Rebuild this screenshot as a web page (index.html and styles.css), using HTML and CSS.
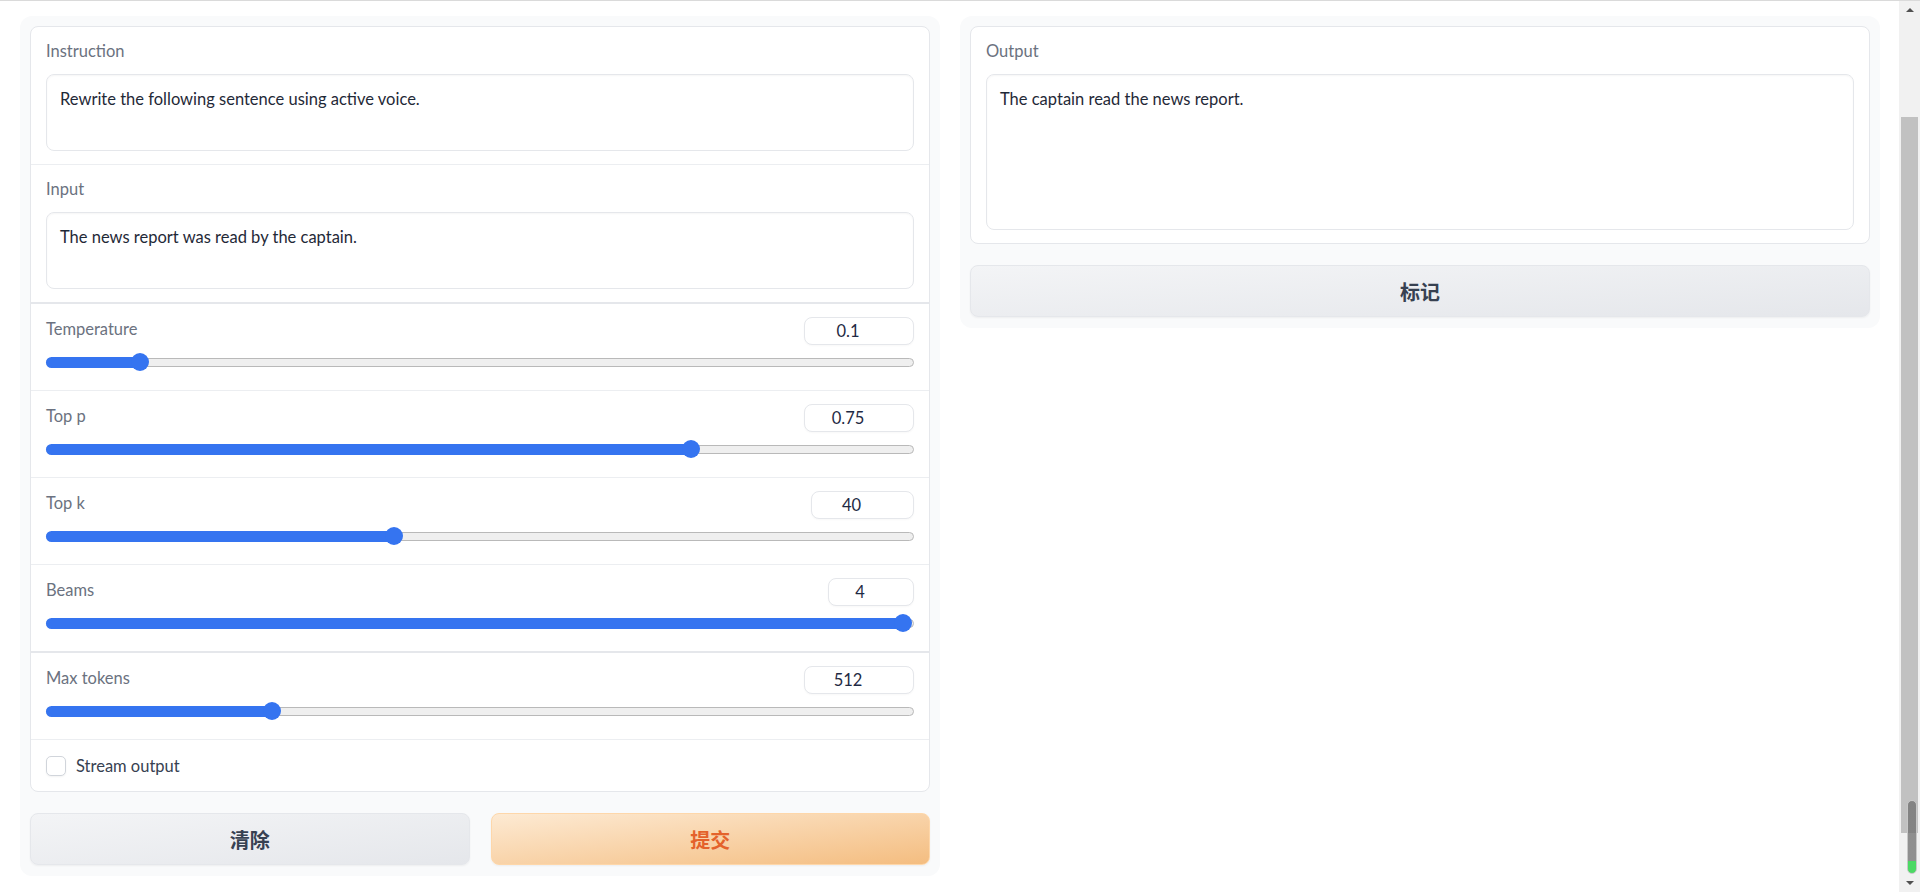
FILE: index.html
```html
<!DOCTYPE html>
<html lang="en">
<head>
    <meta charset="UTF-8">
    <meta name="viewport" content="width=device-width, initial-scale=1.0">
    <title>Alpaca LoRA</title>
    <link rel="stylesheet" href="styles.css">
</head>
<body>
    <div class="app">
        <main class="page">
            <!-- left column: prompt + generation settings -->
            <section class="col">
                <div class="panel">
                    <div class="card">
                        <div class="field">
                            <label class="lbl">Instruction</label>
                            <textarea class="box box-sm" readonly>Rewrite the following sentence using active voice.</textarea>
                        </div>
                        <div class="field">
                            <label class="lbl">Input</label>
                            <textarea class="box box-sm" readonly>The news report was read by the captain.</textarea>
                        </div>

                        <div class="field range group-start">
                            <div class="range-head">
                                <label class="lbl">Temperature</label>
                                <input class="num" type="text" value="0.1" readonly>
                            </div>
                            <div class="slider"><div class="track"><div class="fill" style="--v: 0.1"></div></div></div>
                        </div>
                        <div class="field range">
                            <div class="range-head">
                                <label class="lbl">Top p</label>
                                <input class="num" type="text" value="0.75" readonly>
                            </div>
                            <div class="slider"><div class="track"><div class="fill" style="--v: 0.75"></div></div></div>
                        </div>
                        <div class="field range">
                            <div class="range-head">
                                <label class="lbl">Top k</label>
                                <input class="num num-md" type="text" value="40" readonly>
                            </div>
                            <div class="slider"><div class="track"><div class="fill" style="--v: 0.4"></div></div></div>
                        </div>
                        <div class="field range">
                            <div class="range-head">
                                <label class="lbl">Beams</label>
                                <input class="num num-sm" type="text" value="4" readonly>
                            </div>
                            <div class="slider"><div class="track"><div class="fill" style="--v: 1"></div></div></div>
                        </div>
                        <div class="field range group-start">
                            <div class="range-head">
                                <label class="lbl">Max tokens</label>
                                <input class="num" type="text" value="512" readonly>
                            </div>
                            <div class="slider"><div class="track"><div class="fill" style="--v: 0.256"></div></div></div>
                        </div>

                        <div class="field check">
                            <span class="checkbox"></span>
                            <span class="check-text">Stream output</span>
                        </div>
                    </div>

                    <div class="actions">
                        <button class="btn">清除</button>
                        <button class="btn btn-primary">提交</button>
                    </div>
                </div>
            </section>

            <!-- right column: output -->
            <section class="col">
                <div class="panel">
                    <div class="card">
                        <div class="field">
                            <label class="lbl">Output</label>
                            <textarea class="box box-lg" readonly>The captain read the news report.</textarea>
                        </div>
                    </div>
                    <button class="btn">标记</button>
                </div>
            </section>
        </main>

        <div class="scrollbar">
            <span class="arrow arrow-up"></span>
            <div class="sb-track">
                <div class="sb-thumb"></div>
                <div class="sb-pill"></div>
            </div>
            <span class="arrow arrow-down"></span>
        </div>
    </div>
</body>
</html>
```

FILE: styles.css
```css
* {
    box-sizing: border-box;
}

html, body {
    margin: 0;
    height: 100%;
    overflow: hidden;
}

body {
    background: #fff;
    font-family: Lato, "Noto Sans", "Noto Sans CJK SC", sans-serif;
    color: #1f2937;
    border-top: 1px solid #dadada;
}

.app {
    display: flex;
    height: 100%;
}

.page {
    flex: 1;
    display: grid;
    grid-template-columns: 1fr 1fr;
    gap: 20px;
    align-items: start;
    padding: 15px 19px 0 20px;
}

.panel {
    background: #f9fafb;
    border-radius: 12px;
    padding: 10px 10px 11px;
    display: flex;
    flex-direction: column;
    gap: 21px;
}

.card {
    background: #fff;
    border: 1px solid #e5e7eb;
    border-radius: 8px;
    overflow: hidden;
}

.field {
    padding: 14px 15px 13px;
    border-top: 1px solid #eceef1;
}

.field:first-child {
    border-top: none;
}

.group-start {
    border-top: 2px solid #e5e7eb;
}

.lbl {
    display: block;
    font-size: 16.5px;
    line-height: 20px;
    color: #6b7280;
    margin-bottom: 13px;
}

.box {
    display: block;
    width: 100%;
    border: 1px solid #e5e7eb;
    border-radius: 8px;
    padding: 12px 13px;
    font: 16.5px/24px Lato, "Noto Sans", sans-serif;
    color: #1f2937;
    resize: none;
    outline: none;
    box-shadow: inset 0 1px 2px rgba(0, 0, 0, 0.04);
}

.box-sm {
    height: 77px;
}

.box-lg {
    height: 156px;
}

/* sliders */
.range {
    padding-top: 13px;
    padding-bottom: 19px;
}

.range-head {
    display: flex;
    justify-content: space-between;
    align-items: flex-start;
}

.range-head .lbl {
    margin: 2px 0 0;
}

.num {
    width: 110px;
    height: 28px;
    border: 1px solid #e5e7eb;
    border-radius: 8px;
    padding: 0 22px 0 0;
    text-align: center;
    font: 16.5px Lato, sans-serif;
    color: #1f2a44;
    outline: none;
    box-shadow: 0 1px 2px rgba(0, 0, 0, 0.03);
}

.num-md {
    width: 103px;
}

.num-sm {
    width: 86px;
}

.slider {
    height: 18px;
    margin-top: 8px;
    display: flex;
    align-items: center;
}

.track {
    flex: 1;
    height: 9px;
    background: #efefef;
    border: 1px solid #b9b9b9;
    border-radius: 5px;
    display: flex;
    align-items: center;
}

.fill {
    position: relative;
    width: calc(9px + var(--v) * (100% - 18px));
    height: 11px;
    margin-left: -1px;
    background: #3574f0;
    border-radius: 6px;
}

.fill::after {
    content: "";
    position: absolute;
    right: -9px;
    top: 50%;
    width: 18px;
    height: 18px;
    margin-top: -9px;
    border-radius: 50%;
    background: #3574f0;
}

/* checkbox row */
.check {
    display: flex;
    align-items: center;
    gap: 10px;
    padding: 16px 15px 15px;
}

.checkbox {
    width: 20px;
    height: 20px;
    border: 1px solid #d1d5db;
    border-radius: 5px;
    background: #fff;
    box-shadow: 0 1px 2px rgba(0, 0, 0, 0.05);
}

.check-text {
    font-size: 16.5px;
    color: #374151;
}

/* buttons */
.actions {
    display: grid;
    grid-template-columns: 1fr 1fr;
    gap: 21px;
}

.btn {
    height: 52px;
    border: 1px solid #e5e7eb;
    border-radius: 8px;
    background: linear-gradient(to bottom right, #f3f4f6, #e5e7eb);
    font: 700 20px "Noto Sans CJK SC", sans-serif;
    color: #374151;
    box-shadow: 0 1px 2px rgba(0, 0, 0, 0.05);
}

.btn-primary {
    border-color: #fed7aa;
    background: linear-gradient(to bottom right, #fdead3, #f4bd80);
    color: #e4622b;
}

/* fake browser scrollbar */
.scrollbar {
    width: 21px;
    flex-shrink: 0;
    background: #f1f1f1;
    display: flex;
    flex-direction: column;
    align-items: center;
}

.arrow {
    width: 0;
    height: 0;
    border-left: 4px solid transparent;
    border-right: 4px solid transparent;
    margin: 7px 0;
}

.arrow-up {
    border-bottom: 4px solid #505050;
}

.arrow-down {
    border-top: 4px solid #505050;
}

.sb-track {
    flex: 1;
    width: 100%;
    position: relative;
    padding: 98px 2px 0;
}

.sb-thumb {
    height: 716px;
    background: #c1c1c1;
}

.sb-pill {
    position: absolute;
    left: 8px;
    width: 10px;
    top: 781px;
    height: 74px;
    border-radius: 5px;
    background: linear-gradient(rgba(110, 110, 110, 0.75) 84%, #4cd964 84%);
    border: 1px solid #c8c8c8;
}
```
